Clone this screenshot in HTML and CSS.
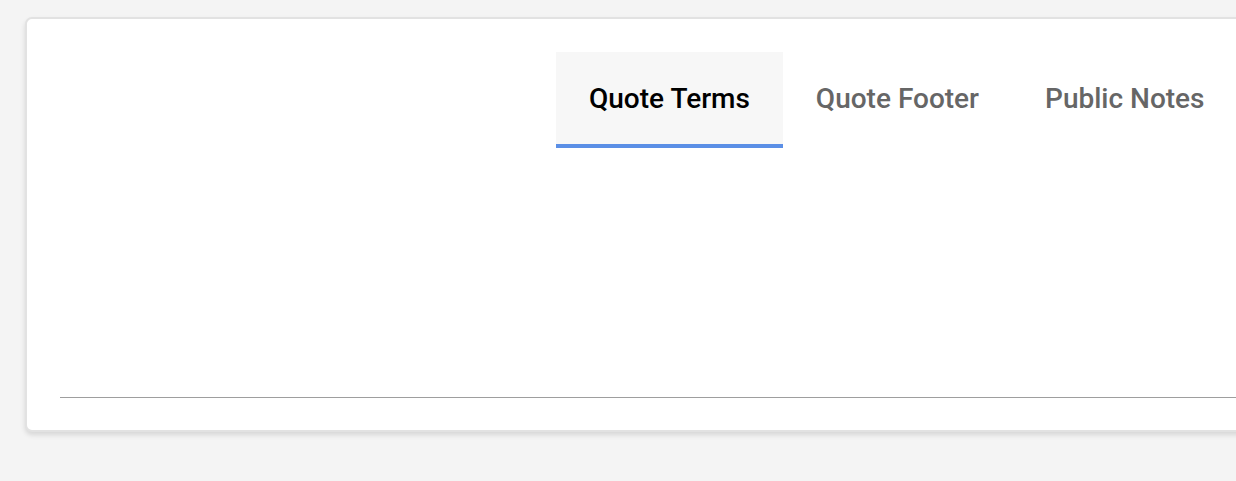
FILE: index.html
```html
<!DOCTYPE html>
<html>
<head>
<meta charset="utf-8">
<link rel="stylesheet" href="styles.css">
</head>
<body>
<div class="page">
  <div class="card">
    <div class="tabs">
      <div class="tab active">Quote Terms</div>
      <div class="tab">Quote Footer</div>
      <div class="tab">Public Notes</div>
    </div>
    <div class="panel"></div>
    <div class="divider"></div>
  </div>
</div>
</body>
</html>
```
FILE: styles.css
```css
html, body {
  margin: 0;
  padding: 0;
  background: #f4f4f4;
  overflow: hidden;
  font-family: Roboto, "Liberation Sans", sans-serif;
}
.page {
  width: 1236px;
  height: 481px;
  overflow: hidden;
  padding: 17px 0 0 25px;
  box-sizing: border-box;
}
.card {
  width: 1300px;
  height: 415px;
  background: #fff;
  border: 2px solid #e2e2e2;
  border-radius: 7px;
  box-shadow: 0 3px 5px rgba(0, 0, 0, 0.12);
  box-sizing: border-box;
  padding: 33px 0 0 33px;
  display: flex;
  flex-direction: column;
}
.tabs {
  display: flex;
  margin-left: 496px;
}
.tab {
  height: 92px;
  padding: 0 33px;
  display: flex;
  align-items: center;
  font-size: 28px;
  font-weight: 500;
  color: #666;
  border-bottom: 4px solid transparent;
}
.tab.active {
  background: #f7f7f7;
  color: #000;
  border-bottom-color: #5b8fe6;
}
.panel {
  height: 249px;
}
.divider {
  height: 1px;
  background: #9e9e9e;
}
```
